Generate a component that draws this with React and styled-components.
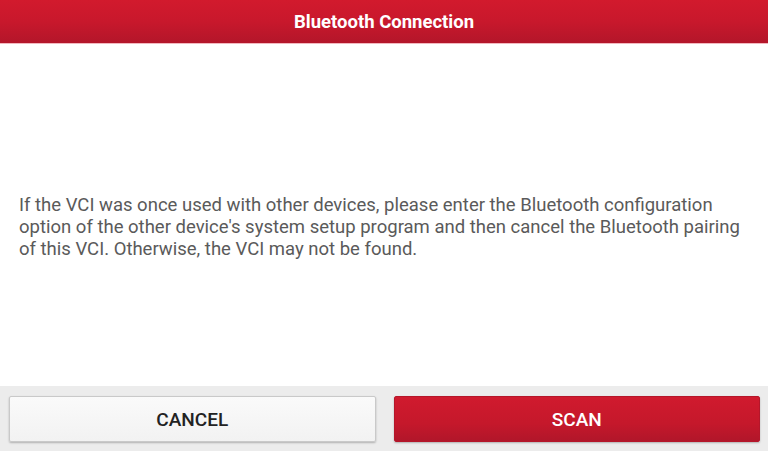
import React from 'react';
import styled, { createGlobalStyle } from 'styled-components';

const GlobalStyle = createGlobalStyle`
  html, body {
    margin: 0;
    padding: 0;
    background: #ffffff;
  }
  body {
    font-family: Roboto, "Liberation Sans", Arial, sans-serif;
  }
`;

const Screen = styled.div`
  width: 768px;
  height: 451px;
  display: flex;
  flex-direction: column;
  background: #ffffff;
  overflow: hidden;
`;

const TitleBar = styled.div`
  height: 43px;
  flex: 0 0 43px;
  display: flex;
  align-items: center;
  justify-content: center;
  background: linear-gradient(to bottom, #d21a2d 0%, #c8182c 50%, #b3162a 100%);
  border-bottom: 1px solid #f2b8bf;
`;

const Title = styled.h1`
  margin: 0;
  font-size: 18.5px;
  font-weight: 700;
  color: #ffffff;
  letter-spacing: 0;
`;

const Content = styled.div`
  flex: 1;
  display: flex;
  align-items: center;
  padding: 24px 18px 0 19px;
`;

const Message = styled.p`
  margin: 0;
  font-size: 18.5px;
  line-height: 22px;
  color: #5a5a5a;
`;

const ButtonBar = styled.div`
  flex: 0 0 65px;
  height: 65px;
  box-sizing: border-box;
  display: flex;
  gap: 18px;
  padding: 10px 8px 9px 9px;
  background: #ececec;
`;

const DialogButton = styled.button`
  flex: 1;
  height: 46px;
  font-family: inherit;
  font-size: 19px;
  font-weight: 500;
  text-transform: uppercase;
  border-radius: 2px;
  cursor: pointer;
  color: ${p => (p.$primary ? '#ffffff' : '#222222')};
  background: ${p =>
    p.$primary
      ? 'linear-gradient(to bottom, #d01a2e 0%, #c5182b 60%, #b1162a 100%)'
      : 'linear-gradient(to bottom, #fafafa 0%, #f2f2f2 100%)'};
  border: 1px solid ${p => (p.$primary ? '#b5162a' : '#c9c9c9')};
  box-shadow: 0 1px 2px rgba(0, 0, 0, 0.25);
`;

export default function App() {
  return (
    <>
      <GlobalStyle />
      <Screen>
        <TitleBar>
          <Title>Bluetooth Connection</Title>
        </TitleBar>
        <Content>
          <Message>
            If the VCI was once used with other devices, please enter the Bluetooth configuration
            option of the other device's system setup program and then cancel the Bluetooth pairing
            of this VCI. Otherwise, the VCI may not be found.
          </Message>
        </Content>
        <ButtonBar>
          <DialogButton>Cancel</DialogButton>
          <DialogButton $primary>Scan</DialogButton>
        </ButtonBar>
      </Screen>
    </>
  );
}
